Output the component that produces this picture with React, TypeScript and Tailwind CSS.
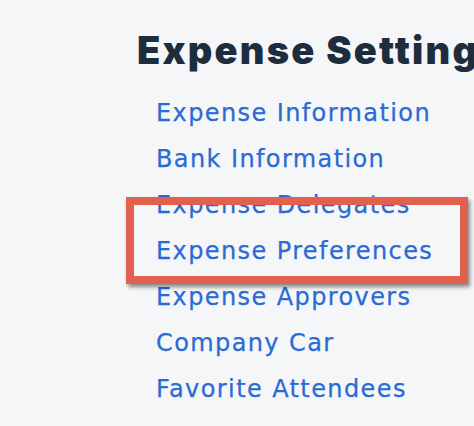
import React from "react";

const links = [
  "Expense Information",
  "Bank Information",
  "Expense Delegates",
  "Expense Preferences",
  "Expense Approvers",
  "Company Car",
  "Favorite Attendees",
];

export default function App() {
  return (
    <div className="relative w-[474px] h-[426px] overflow-hidden bg-[#f5f6f7]">
      <div className="pt-[31px] pl-[137px]">
        <h1
          className="whitespace-nowrap text-[38px] leading-[38px] font-black tracking-[2.2px] text-[#1d2d3e]"
          style={{ fontFamily: "Inter, 'Open Sans', sans-serif" }}
        >
          Expense Settings
        </h1>
      </div>
      <ul
        className="mt-[21px] pl-[156px] flex flex-col"
        style={{ fontFamily: "'DejaVu Sans', 'Liberation Sans', sans-serif" }}
      >
        {links.map((l) => (
          <li
            key={l}
            className="whitespace-nowrap text-[24px] leading-[46px] tracking-[1.4px] text-[#2a6ad5] [-webkit-text-stroke:0.25px_#2a6ad5]"
          >
            <a href="#">{l}</a>
          </li>
        ))}
      </ul>
      <div className="absolute left-[126px] top-[197px] w-[342px] h-[87px] border-[8px] border-[#e2604d] shadow-[2px_3px_4px_rgba(0,0,0,0.45)]" />
    </div>
  );
}
